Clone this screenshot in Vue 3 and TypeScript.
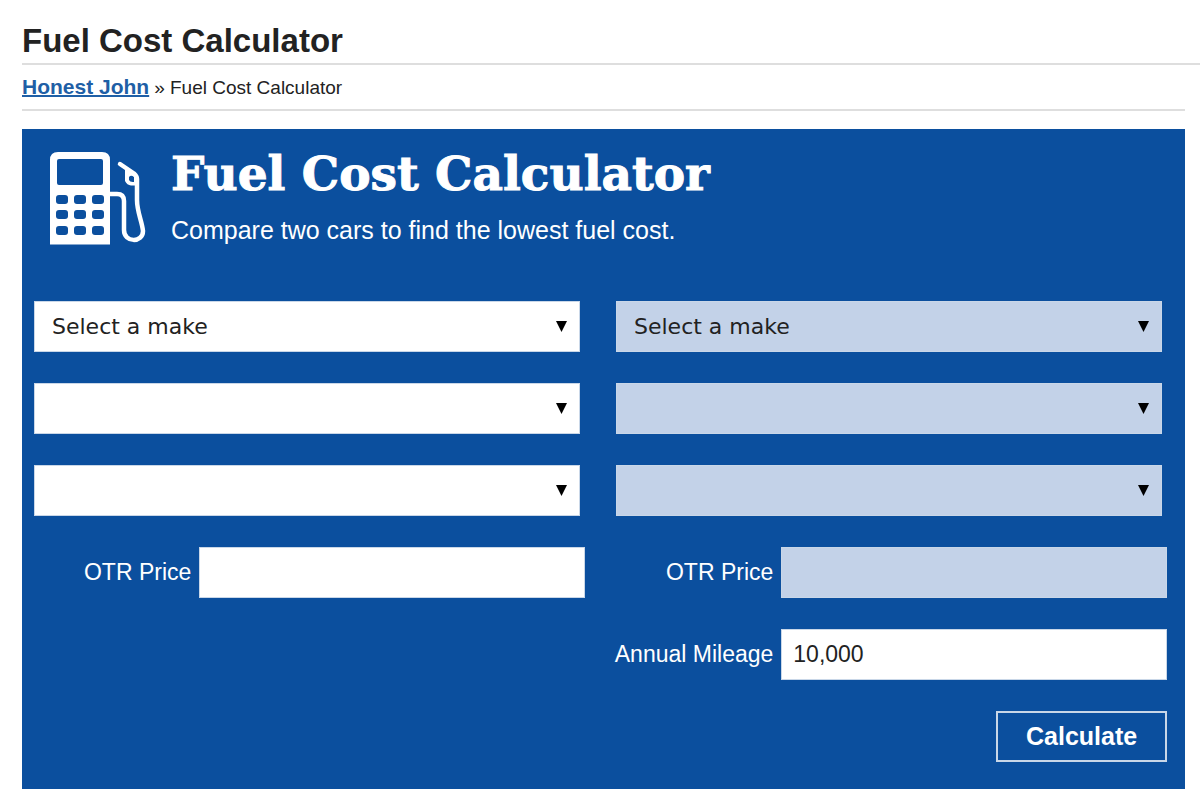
<script setup lang="ts">
import { ref } from 'vue'

interface Car {
  id: string
  name: string
  make: string
  model: string
  trim: string
  price: string
}

const cars = ref<Car[]>([
  { id: 'first', name: 'First car', make: '', model: '', trim: '', price: '' },
  { id: 'second', name: 'Second car', make: '', model: '', trim: '', price: '' },
])
const mileage = ref('10,000')

const keyColumns = [16, 34, 52]
const keyRows = [55, 70, 86]
</script>

<template>
  <div class="page">
    <h1 class="page-title">Fuel Cost Calculator</h1>
    <nav class="breadcrumb" aria-label="Breadcrumb">
      <a href="#">Honest John</a>
      <span>» Fuel Cost Calculator</span>
    </nav>

    <main class="panel">
      <header class="panel-header">
        <svg class="pump" viewBox="10 12 96 93" aria-hidden="true">
          <path
            fill="#fff"
            fill-rule="evenodd"
            d="M10 104.500V20Q10 12 18 12H62Q70 12 70 20V104.500ZM19 19Q17 19 17 21V43Q17 45 19 45H61Q63 45 63 43V21Q63 19 61 19Z"
          />
          <template v-for="y in keyRows" :key="y">
            <rect v-for="x in keyColumns" :key="x" :x="x" :y="y" width="12" height="9" rx="3" fill="#0b4f9e" />
          </template>
          <path
            fill="none"
            stroke="#fff"
            stroke-width="4.500"
            stroke-linejoin="round"
            stroke-linecap="round"
            d="M70 54H77Q84 54 84 61V90C84 103 103 103 103 91C102 81 97 72 97 60V39Q97 36 94 33.500L80 24"
          />
          <path
            fill="#fff"
            fill-rule="evenodd"
            d="M85 28L96 33V45.500H91Q87 45 85 41ZM89 37V40Q90 42.500 94 42V37Q91 34.500 89 37Z"
          />
        </svg>
        <div class="intro">
          <h2>Fuel Cost Calculator</h2>
          <p>Compare two cars to find the lowest fuel cost.</p>
        </div>
      </header>

      <form class="form" @submit.prevent>
        <fieldset v-for="car in cars" :key="car.id" class="car" :class="car.id" :aria-label="car.name">
          <div class="select">
            <select v-model="car.make" aria-label="Make">
              <option value="">Select a make</option>
            </select>
          </div>
          <div class="select">
            <select v-model="car.model" aria-label="Model"><option value=""></option></select>
          </div>
          <div class="select">
            <select v-model="car.trim" aria-label="Version"><option value=""></option></select>
          </div>
          <div class="field">
            <label :for="`${car.id}-price`">OTR Price</label>
            <input :id="`${car.id}-price`" v-model="car.price" type="text" />
          </div>
        </fieldset>

        <div class="totals">
          <div class="field">
            <label for="mileage">Annual Mileage</label>
            <input id="mileage" v-model="mileage" type="text" />
          </div>
          <button type="submit">Calculate</button>
        </div>
      </form>
    </main>
  </div>
</template>

<style>
body {
  margin: 0;
  background: #fff;
}
</style>

<style scoped>
* {
  box-sizing: border-box;
}

.page {
  padding: 20px 0 11px 22px;
  color: #222;
  font-family: "Liberation Sans", Arial, sans-serif;
}

.page-title {
  margin: 0;
  padding-bottom: 2px;
  border-bottom: 2px solid #dedede;
  font-size: 33px;
  line-height: 41px;
}

.breadcrumb {
  display: flex;
  align-items: baseline;
  gap: 5px;
  margin-right: 15px;
  padding: 7px 0;
  border-bottom: 2px solid #dedede;
  font-size: 19px;
  line-height: 29px;
}

.breadcrumb a {
  color: #1f5fa6;
  font-size: 21px;
  font-weight: bold;
  text-decoration-thickness: 2px;
}

.panel {
  margin: 18px 15px 0 0;
  padding: 23px 18px 27px 12px;
  background: #0b4f9e;
  color: #fff;
}

.panel-header {
  display: flex;
  gap: 25px;
  padding-left: 16px;
  margin-bottom: 56px;
}

.pump {
  flex: none;
  width: 96px;
  height: 93px;
}

h2 {
  margin: 0;
  font-family: "DejaVu Serif", serif;
  font-size: 47px;
  line-height: 44px;
  white-space: nowrap;
  -webkit-text-stroke: 1px #fff;
}

.intro p {
  margin: 20px 0 0;
  font-size: 25px;
  line-height: 29px;
}

.form {
  display: grid;
  grid-template-columns: 1fr 1fr;
  gap: 31px;
}

.car,
.totals {
  display: flex;
  flex-direction: column;
  gap: 31px;
  min-width: 0;
  margin: 0;
  padding: 0;
  border: 0;
}

.totals {
  grid-column: 2;
}

.select {
  position: relative;
  margin-right: 5px;
}

.select::after {
  content: "";
  position: absolute;
  top: 20px;
  right: 13px;
  width: 11px;
  height: 11px;
  background: #000;
  clip-path: polygon(0 0, 100% 0, 50% 100%);
  pointer-events: none;
}

select,
input {
  display: block;
  height: 51px;
  border: 1px solid #c9d7e8;
  border-radius: 0;
  background: #fff;
  color: #222;
}

select {
  width: 100%;
  padding: 0 40px 0 17px;
  appearance: none;
  font-family: "DejaVu Sans", Verdana, sans-serif;
  font-size: 22px;
}

input {
  flex: none;
  width: 70%;
  padding: 0 11px;
  font-family: inherit;
  font-size: 23px;
}

.second select,
.second input {
  background: #c3d2e8;
}

.field {
  display: flex;
  align-items: center;
  justify-content: flex-end;
  gap: 8px;
}

.field label {
  font-size: 23px;
  white-space: nowrap;
}

button {
  align-self: flex-end;
  width: 31%;
  height: 51px;
  padding: 0;
  border: 2px solid #c9d7e8;
  background: transparent;
  color: #fff;
  font-family: inherit;
  font-size: 25px;
  font-weight: bold;
}
</style>
